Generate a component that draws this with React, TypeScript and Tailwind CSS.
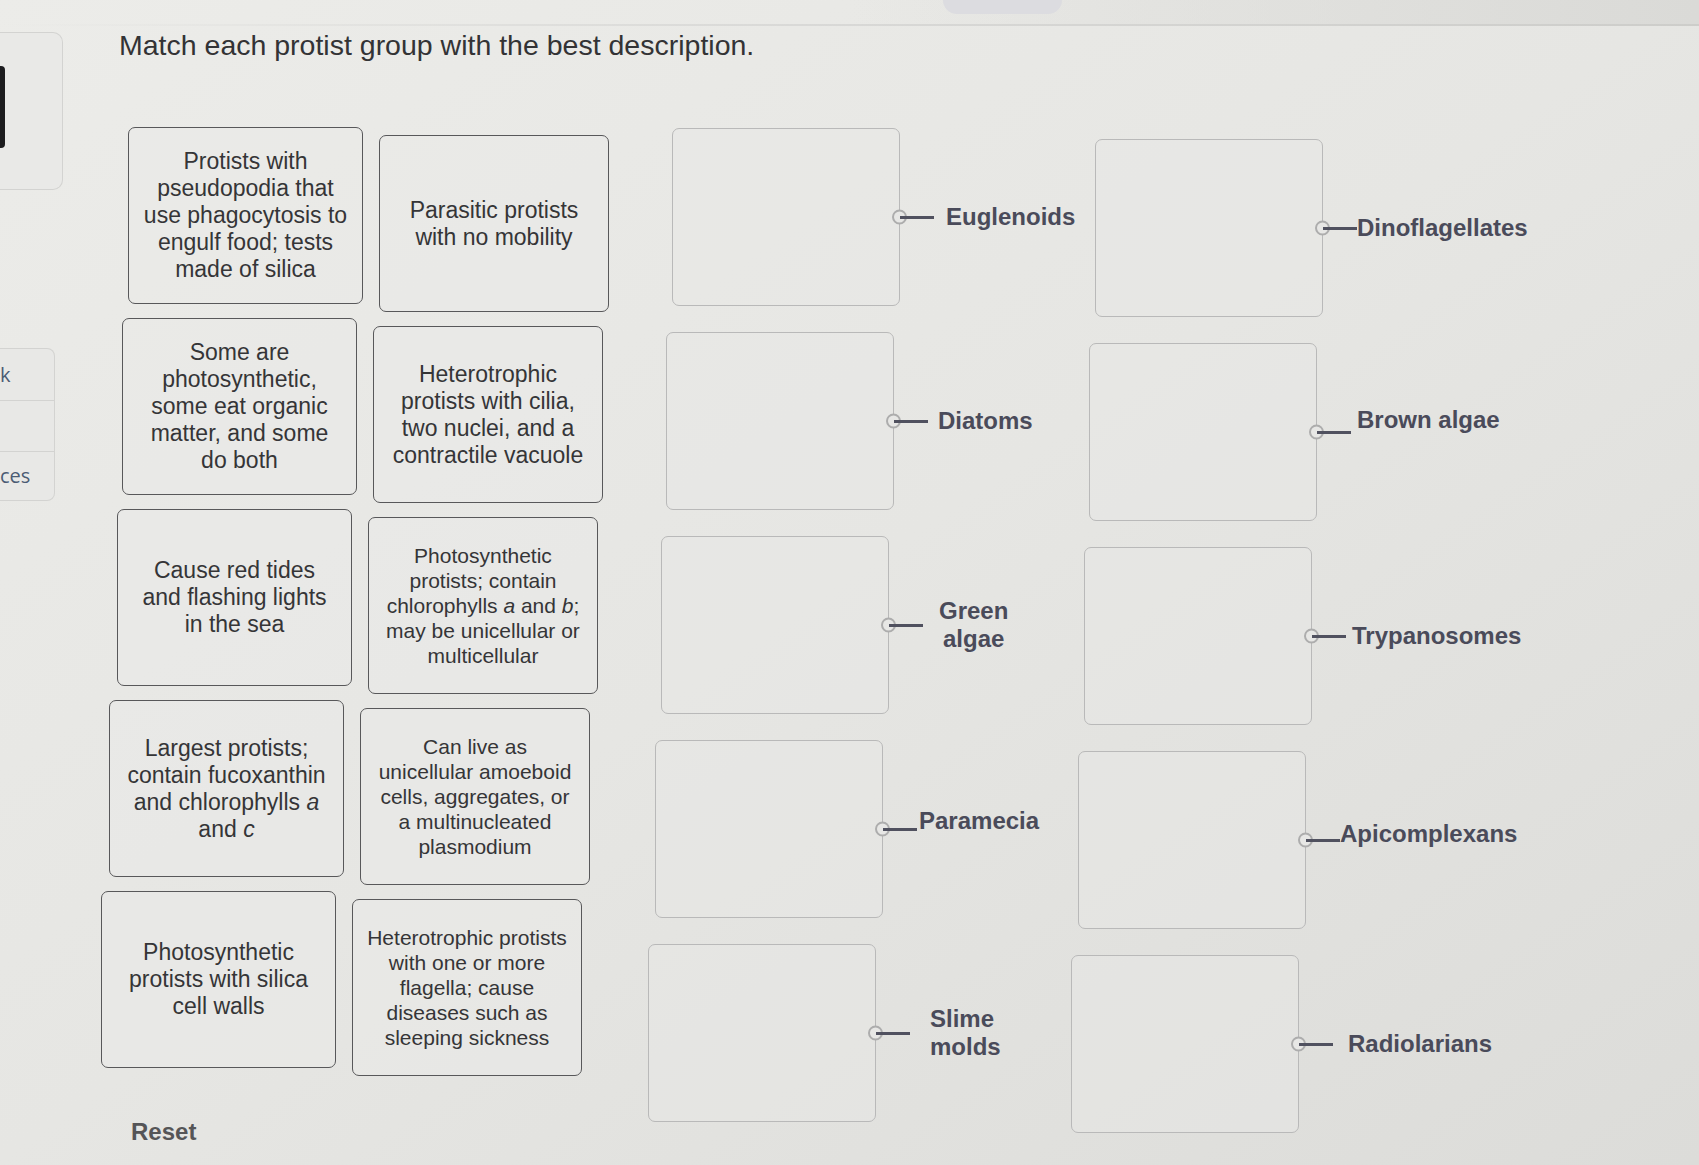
import React from 'react';

type Desc = { lines: React.ReactNode[]; small?: boolean };

const descRows: { ml: string; cards: [Desc, Desc] }[] = [
  {
    ml: 'ml-[27px]',
    cards: [
      { lines: ['Protists with', 'pseudopodia that', 'use phagocytosis to', 'engulf food; tests', 'made of silica'] },
      { lines: ['Parasitic protists', 'with no mobility'] },
    ],
  },
  {
    ml: 'ml-[21px]',
    cards: [
      { lines: ['Some are', 'photosynthetic,', 'some eat organic', 'matter, and some', 'do both'] },
      { lines: ['Heterotrophic', 'protists with cilia,', 'two nuclei, and a', 'contractile vacuole'] },
    ],
  },
  {
    ml: 'ml-[16px]',
    cards: [
      { lines: ['Cause red tides', 'and flashing lights', 'in the sea'] },
      {
        small: true,
        lines: [
          'Photosynthetic',
          'protists; contain',
          <>chlorophylls <i>a</i> and <i>b</i>;</>,
          'may be unicellular or',
          'multicellular',
        ],
      },
    ],
  },
  {
    ml: 'ml-[8px]',
    cards: [
      { lines: ['Largest protists;', 'contain fucoxanthin', <>and chlorophylls <i>a</i></>, <>and <i>c</i></>] },
      { small: true, lines: ['Can live as', 'unicellular amoeboid', 'cells, aggregates, or', 'a multinucleated', 'plasmodium'] },
    ],
  },
  {
    ml: 'ml-0',
    cards: [
      { lines: ['Photosynthetic', 'protists with silica', 'cell walls'] },
      { small: true, lines: ['Heterotrophic protists', 'with one or more', 'flagella; cause', 'diseases such as', 'sleeping sickness'] },
    ],
  },
];

type Target = { label: string[]; gap: string; lift?: string };

const targetRows: { ml: string; a: Target; b: Target }[] = [
  { ml: 'ml-[24px]', a: { label: ['Euglenoids'], gap: 'ml-[12px]' }, b: { label: ['Dinoflagellates'], gap: 'ml-0' } },
  { ml: 'ml-[18px]', a: { label: ['Diatoms'], gap: 'ml-[10px]' }, b: { label: ['Brown algae'], gap: 'ml-[6px]', lift: 'mb-[24px]' } },
  { ml: 'ml-[13px]', a: { label: ['Green', 'algae'], gap: 'ml-[16px] text-center' }, b: { label: ['Trypanosomes'], gap: 'ml-[6px]' } },
  { ml: 'ml-[7px]', a: { label: ['Paramecia'], gap: 'ml-[2px]', lift: 'mb-[16px]' }, b: { label: ['Apicomplexans'], gap: 'ml-0', lift: 'mb-[12px]' } },
  { ml: 'ml-0', a: { label: ['Slime', 'molds'], gap: 'ml-[20px]' }, b: { label: ['Radiolarians'], gap: 'ml-[15px]' } },
];

function DescCard({ d, className }: { d: Desc; className: string }) {
  return (
    <div
      className={
        'flex items-center justify-center rounded-[7px] border-[1.5px] border-[#58585a] bg-[#e9e9e7]/60 px-2 text-center text-[#353537] ' +
        className +
        (d.small ? ' text-[21px] leading-[25px]' : ' text-[23px] leading-[27px]')
      }
    >
      <div>
        {d.lines.map((l, i) => (
          <div key={i} className="whitespace-nowrap">{l}</div>
        ))}
      </div>
    </div>
  );
}

function DropTarget({ t, className = '' }: { t: Target; className?: string }) {
  return (
    <div className={'flex items-center ' + className}>
      <div className="relative h-[178px] w-[228px] shrink-0 rounded-[7px] border-[1.5px] border-[#b9b9b9] bg-[#e8e8e6]/50">
        <span className="absolute -right-[8px] top-1/2 h-[15px] w-[15px] -translate-y-1/2 rounded-full border-2 border-[#adadad] bg-[#e7e7e5]" />
      </div>
      <span className="relative h-[3px] w-[34px] shrink-0 bg-[#50515f]" />
      <div className={'text-[24px] font-bold leading-[28px] text-[#4a4b5a] ' + t.gap + ' ' + (t.lift || '')}>
        {t.label.map((l) => (
          <div key={l}>{l}</div>
        ))}
      </div>
    </div>
  );
}

export default function App() {
  return (
    <div className="relative h-[1165px] w-full overflow-hidden bg-linear-to-br from-[#ecece9] via-[#e6e6e3] to-[#dcdcd9] font-[family-name:Liberation_Sans,Arial,sans-serif] text-[#3a3a3a]">
      <header className="flex h-[24px] items-start bg-linear-to-r from-transparent via-transparent to-[#dadad7]">
        <div className="ml-[943px] h-[14px] w-[119px] rounded-b-[14px] bg-[#dcdce0]" />
      </header>
      <div className="h-[2px] bg-linear-to-r from-transparent via-[#d8d8d6] to-[#cdcdca]" />

      <div className="flex">
        <aside className="flex w-[63px] shrink-0 flex-col font-[family-name:Open_Sans,sans-serif] text-[20px] text-[#4b5b73]">
          <div className="mt-[6px] h-[158px] w-[63px] rounded-r-[10px] border border-l-0 border-[#d3d3d1] bg-[#e9e9e7]">
            <div className="mt-[33px] h-[82px] w-[5px] rounded-r-sm bg-[#1c1c1e]" />
          </div>
          <div className="mt-[158px] flex w-[55px] flex-col rounded-r-[8px] border border-l-0 border-[#d3d3d1] bg-[#e8e8e6]">
            <div className="flex h-[52px] items-center border-b border-[#d3d3d1] leading-none">k</div>
            <div className="h-[51px] border-b border-[#d3d3d1]" />
            <div className="flex h-[48px] items-center leading-none">ces</div>
          </div>
        </aside>

        <main className="flex-1">
          <h1 className="ml-[56px] mt-[2px] text-[28.5px] leading-[34px] text-[#333335]">
            Match each protist group with the best description.
          </h1>

          <div className="mt-[65px] flex items-start">
            <div className="ml-[38px] flex flex-col">
              <div className="flex flex-col gap-[6px]">
                {descRows.map((r, i) => (
                  <div key={i} className={'flex items-start gap-[16px] ' + r.ml}>
                    <DescCard d={r.cards[0]} className="h-[177px] w-[235px]" />
                    <DescCard d={r.cards[1]} className="mt-[8px] h-[177px] w-[230px]" />
                  </div>
                ))}
              </div>
              <button className="ml-[30px] mt-[42px] self-start text-[24px] font-bold leading-[28px] text-[#555557]">
                Reset
              </button>
            </div>

            <div className="ml-[39px] mt-[1px] flex flex-col gap-[15px]">
              {targetRows.map((r, i) => (
                <div key={i} className={'flex items-start ' + r.ml}>
                  <DropTarget t={r.a} className="w-[423px] shrink-0" />
                  <DropTarget t={r.b} className="mt-[11px]" />
                </div>
              ))}
            </div>
          </div>
        </main>
      </div>
    </div>
  );
}
